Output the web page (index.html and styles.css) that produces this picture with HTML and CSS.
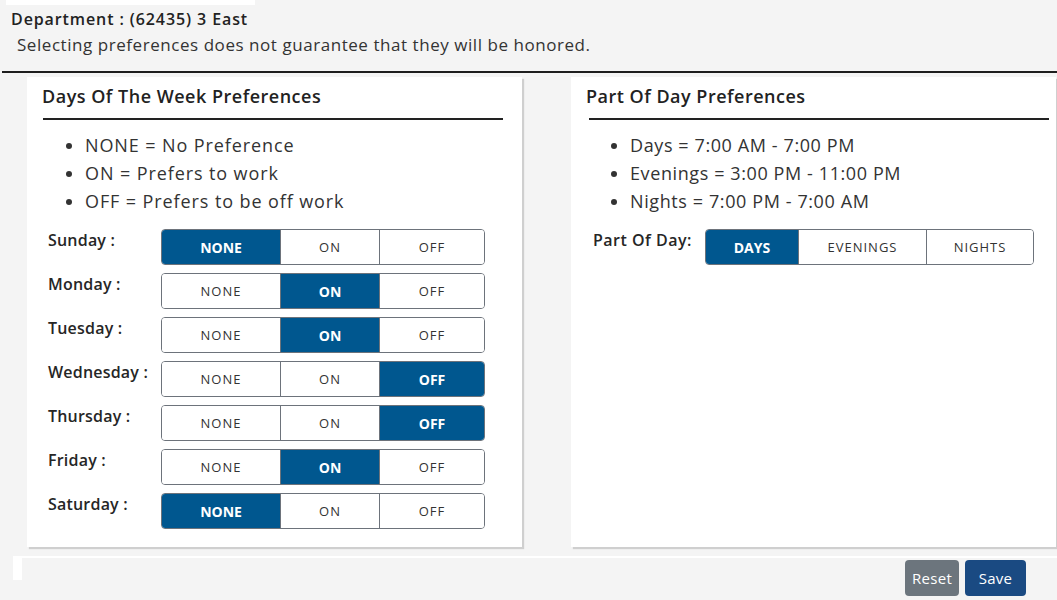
FILE: index.html
```html
<!DOCTYPE html>
<html>
<head>
<meta charset="utf-8">
<link rel="stylesheet" href="styles.css">
</head>
<body>
<div class="top-strip"></div>
<div class="header">
  <div class="dept">Department : (62435) 3 East</div>
  <div class="note">Selecting preferences does not guarantee that they will be honored.</div>
</div>
<div class="rule"></div>
<div class="cards">
  <section class="card card-left">
    <h2 class="card-title">Days Of The Week Preferences</h2>
    <div class="card-hr"></div>
    <ul class="legend">
      <li>NONE = No Preference</li>
      <li>ON = Prefers to work</li>
      <li>OFF = Prefers to be off work</li>
    </ul>
    <div class="rows">
      <div class="row"><span class="label">Sunday :</span><div class="seg"><span class="b w1 active">NONE</span><span class="b w2">ON</span><span class="b w3">OFF</span></div></div>
      <div class="row"><span class="label">Monday :</span><div class="seg"><span class="b w1">NONE</span><span class="b w2 active">ON</span><span class="b w3">OFF</span></div></div>
      <div class="row"><span class="label">Tuesday :</span><div class="seg"><span class="b w1">NONE</span><span class="b w2 active">ON</span><span class="b w3">OFF</span></div></div>
      <div class="row"><span class="label">Wednesday :</span><div class="seg"><span class="b w1">NONE</span><span class="b w2">ON</span><span class="b w3 active">OFF</span></div></div>
      <div class="row"><span class="label">Thursday :</span><div class="seg"><span class="b w1">NONE</span><span class="b w2">ON</span><span class="b w3 active">OFF</span></div></div>
      <div class="row"><span class="label">Friday :</span><div class="seg"><span class="b w1">NONE</span><span class="b w2 active">ON</span><span class="b w3">OFF</span></div></div>
      <div class="row"><span class="label">Saturday :</span><div class="seg"><span class="b w1 active">NONE</span><span class="b w2">ON</span><span class="b w3">OFF</span></div></div>
    </div>
  </section>
  <section class="card card-right">
    <h2 class="card-title">Part Of Day Preferences</h2>
    <div class="card-hr"></div>
    <ul class="legend">
      <li>Days = 7:00 AM - 7:00 PM</li>
      <li>Evenings = 3:00 PM - 11:00 PM</li>
      <li>Nights = 7:00 PM - 7:00 AM</li>
    </ul>
    <div class="row pod-row"><span class="label pod-label">Part Of Day:</span><div class="seg"><span class="b d1 active">DAYS</span><span class="b d2">EVENINGS</span><span class="b d3">NIGHTS</span></div></div>
  </section>
</div>
<div class="footer">
  <div class="footer-bar"><div class="footer-block"></div></div>
  <div class="actions">
    <button class="btn btn-reset">Reset</button>
    <button class="btn btn-save">Save</button>
  </div>
</div>
</body>
</html>
```
FILE: styles.css
```css
* { box-sizing: border-box; }
html, body { margin: 0; padding: 0; }
body {
  background: #f4f4f4;
  font-family: "Open Sans", "Liberation Sans", sans-serif;
  color: #222;
  width: 1057px;
  height: 600px;
  overflow: hidden;
}
.top-strip {
  margin-left: 6px;
  width: 249px;
  height: 5px;
  background: #fff;
}
.header { padding-left: 11px; }
.dept {
  font-size: 16px;
  font-weight: 600;
  line-height: 20px;
  padding-top: 4px;
  letter-spacing: 0.9px;
  color: #222;
}
.note {
  font-size: 17px;
  line-height: 20px;
  padding-left: 6px;
  margin-top: 6px;
  letter-spacing: 0.55px;
  color: #333;
}
.rule {
  margin-top: 16px;
  margin-left: 2px;
  border-top: 2px solid #1e1e1e;
}
.cards {
  display: flex;
  margin-top: 4px;
  height: 470px;
}
.card {
  background: #fff;
  box-shadow: 2px 2px 1px #cfcfcf;
  height: 470px;
}
.card-left {
  margin-left: 27px;
  width: 495px;
  padding: 7px 19px 0 15px;
}
.card-right {
  margin-left: 49px;
  width: 485px;
  padding: 7px 7px 0 15px;
}
.card-title {
  margin: 0;
  font-size: 18px;
  font-weight: 600;
  line-height: 24px;
  letter-spacing: 0.5px;
  color: #222;
}
.card-hr {
  margin-top: 10px;
  margin-left: 1px;
  border-top: 2px solid #222;
}
.card-right .card-hr { margin-left: 3px; }
.legend {
  margin: 11px 0 0;
  padding-left: 43px;
  font-size: 18px;
  line-height: 28px;
  letter-spacing: 0.9px;
  color: #333;
}
.card-right .legend { padding-left: 44px; letter-spacing: 0.6px; }
.rows {
  display: flex;
  flex-direction: column;
  gap: 8px;
  margin-top: 14px;
}
.row {
  display: flex;
  align-items: flex-start;
}
.label {
  width: 113px;
  margin-left: 6px;
  font-size: 16px;
  font-weight: 600;
  line-height: 22px;
  letter-spacing: 0.2px;
  color: #262626;
}
.seg {
  display: flex;
  height: 36px;
  border: 1px solid #6d737b;
  border-radius: 4px;
  overflow: hidden;
}
.b {
  display: flex;
  align-items: center;
  justify-content: center;
  font-size: 13px;
  color: #333;
  letter-spacing: 1px;
  background: #fff;
}
.b + .b { border-left: 1px solid #6d737b; }
.b.active {
  background: #00578f;
  color: #fff;
  font-weight: 700;
  font-size: 14px;
  letter-spacing: 0;
}
.w1 { width: 118px; }
.w2 { width: 99px; }
.w3 { width: 105px; }
.d1 { width: 92px; }
.d2 { width: 128px; }
.d3 { width: 107px; }
.pod-row { margin-top: 14px; }
.pod-label { width: 112px; margin-left: 7px; letter-spacing: 0.5px; }
.footer {
  display: flex;
  margin-top: 9px;
  margin-left: 13px;
  height: 41px;
}
.footer-bar {
  flex: 1;
  border-top: 2px solid #fff;
}
.footer-block {
  width: 9px;
  height: 22px;
  background: #fff;
}
.actions {
  display: flex;
  gap: 6px;
  padding: 2px 31px 0 8px;
  border-top: 2px solid #fff;
}
.btn {
  height: 36px;
  border: 0;
  border-radius: 4px;
  color: #fff;
  font-family: "Open Sans", "Liberation Sans", sans-serif;
  font-size: 15px;
  letter-spacing: 0.3px;
  padding: 0;
}
.btn-reset { width: 54px; background: #6c757d; }
.btn-save { width: 61px; background: #1a4a82; }
```
